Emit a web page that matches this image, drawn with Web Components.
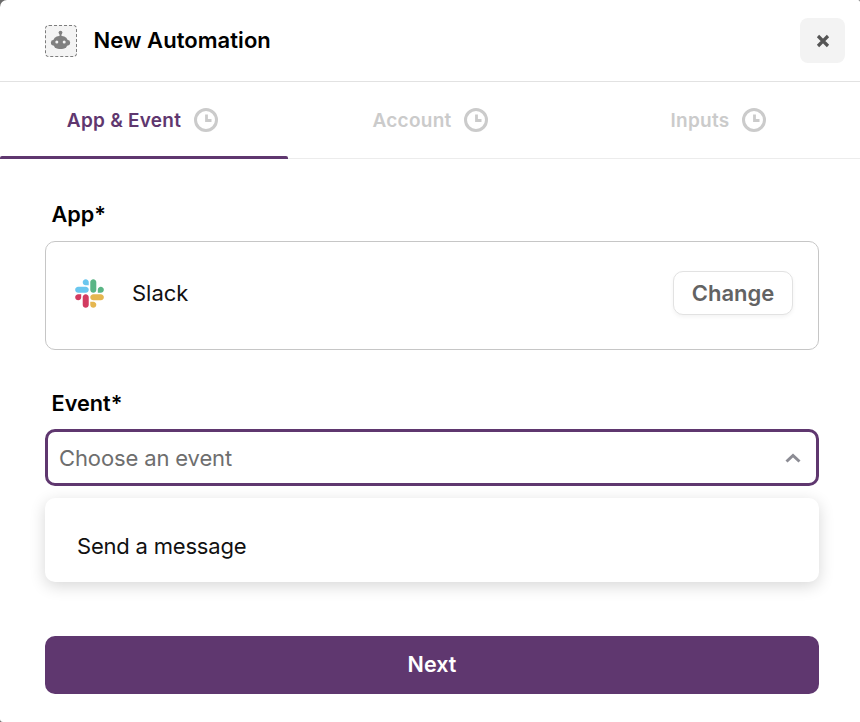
<!DOCTYPE html>
<html><head><meta charset="utf-8"><title>New Automation</title>
<style>
html,body{margin:0;padding:0;height:722px;overflow:hidden;background:#6b6b6b;font-family:Inter,"Liberation Sans",sans-serif}
</style></head><body>
<automation-modal>
  <modal-header slot="header" title-text="New Automation"></modal-header>
  <step-tabs slot="tabs">
    <step-tab active>App &amp; Event</step-tab>
    <step-tab>Account</step-tab>
    <step-tab>Inputs</step-tab>
  </step-tabs>
  <form-field label="App*" style="--label-gap:15px">
    <app-card name="Slack"></app-card>
  </form-field>
  <form-field label="Event*" style="--label-gap:14px;margin-top:41px">
    <event-select placeholder="Choose an event">
      <select-option>Send a message</select-option>
    </event-select>
  </form-field>
  <primary-button slot="footer">Next</primary-button>
</automation-modal>
<script>
function define(name, html, init){
  customElements.define(name, class extends HTMLElement{
    constructor(){super();this.attachShadow({mode:'open'}).innerHTML=html;}
    connectedCallback(){if(init)init.call(this,this.shadowRoot);}
  });
}
define('automation-modal',`<style>
:host{display:flex;flex-direction:column;width:860px;height:722px;background:#fff;border-radius:7px 2px 0 3px;overflow:hidden;box-sizing:border-box;color:#000}
main{flex:1;display:flex;flex-direction:column;padding:43px 41px 0 45px;min-height:0}
footer{padding:0 41px 28px 45px}
</style><slot name="header"></slot><slot name="tabs"></slot><main><slot></slot></main><footer><slot name="footer"></slot></footer>`);
define('modal-header',`<style>
:host{display:flex;align-items:center;height:81px;border-bottom:1px solid #e2e2e2;padding:0 15px 0 45px;gap:16.500px;box-sizing:content-box}
.ic{width:32px;height:32px;box-sizing:border-box;border:1px dashed #7d7d7d;border-radius:4px;background:#f4f4f4;display:flex;align-items:center;justify-content:center}
h1{flex:1;margin:0 0 2px;font:600 22px/1 Inter,sans-serif;letter-spacing:.05px;color:#000}
button{width:45px;height:45px;border:0;border-radius:8px;background:#f3f3f3;display:flex;align-items:center;justify-content:center;padding:0}
</style><div class="ic"><svg width="22" height="22" viewBox="0 0 22 22"><circle cx="10.500" cy="2.600" r="1.900" fill="#808080"/><rect x="9.500" y="3" width="2" height="4" fill="#808080"/><rect x="3" y="6" width="15" height="13" rx="6" fill="#808080"/><rect x="1" y="10" width="19" height="5.500" rx="2.200" fill="#808080"/><circle cx="6.800" cy="12" r="1.500" fill="#f4f4f4"/><circle cx="14.200" cy="12" r="1.500" fill="#f4f4f4"/></svg></div>
<h1></h1><button aria-label="Close"><svg width="14" height="14" viewBox="0 0 14 14"><path d="M2 2l10 10M12 2L2 12" stroke="#555" stroke-width="3.200" stroke-linecap="butt"/></svg></button>`,function(s){s.querySelector('h1').textContent=this.getAttribute('title-text');});
define('step-tabs',`<style>:host{display:grid;grid-template-columns:repeat(3,288px);height:76px;border-bottom:1px solid #ececec;box-sizing:content-box}</style><slot></slot>`);
define('step-tab',`<style>
:host{position:relative;display:flex;align-items:center;justify-content:center;gap:13px;padding-right:3px;font:600 19px/1 Inter,sans-serif;letter-spacing:.25px;color:#cbcbcb}
:host([active]){color:#5f376f}
:host([active])::after{content:"";position:absolute;left:0;right:0;bottom:-1px;height:3px;background:#5f376f;border-radius:2px 2px 0 0}
svg{display:block}
</style><span><slot></slot></span><svg width="24" height="24" viewBox="0 0 24 24" fill="none" stroke="#cbcbcb"><circle cx="12" cy="12" r="10.500" stroke-width="3"/><path d="M12.500 6.500V12.500H17.500" stroke-width="2.800"/></svg>`);
define('form-field',`<style>
:host{display:block;position:relative}
label{display:block;font:600 21.700px/24px Inter,sans-serif;color:#000;padding-left:6.500px;margin-bottom:var(--label-gap,14px)}
</style><label></label><slot></slot>`,function(s){s.querySelector('label').textContent=this.getAttribute('label');});
define('app-card',`<style>
:host{display:flex;align-items:center;height:109px;box-sizing:border-box;border:1px solid #c6c6c6;border-radius:10px;padding:0 25px 6px 29px;gap:28px}
svg{display:block;flex:none;margin-top:1px}
span{flex:1;font:400 22px/1 Inter,sans-serif;color:#111}
button{width:120px;height:44px;box-sizing:border-box;border:1px solid #e2e2e2;border-radius:10px;background:#fff;color:#636363;font:600 22px/1 Inter,sans-serif;padding:0;box-shadow:0 2px 4px rgba(0,0,0,.05)}
</style><svg width="29" height="29" viewBox="0 0 127 127"><path fill="#d23b60" d="M27.200 80c0 7.300-5.900 13.200-13.200 13.200C6.700 93.200.8 87.300.8 80c0-7.300 5.900-13.200 13.200-13.200h13.200V80zm6.600 0c0-7.300 5.900-13.200 13.200-13.200 7.300 0 13.200 5.900 13.200 13.200v33c0 7.300-5.900 13.200-13.200 13.200-7.300 0-13.200-5.900-13.200-13.200V80z"/><path fill="#6ac6ee" d="M47 27c-7.300 0-13.200-5.900-13.200-13.200C33.800 6.500 39.700.6 47 .6c7.300 0 13.200 5.900 13.200 13.200V27H47zm0 6.700c7.300 0 13.200 5.900 13.200 13.200 0 7.300-5.900 13.200-13.200 13.200H13.900C6.600 60.100.7 54.200.7 46.900c0-7.300 5.900-13.200 13.200-13.200H47z"/><path fill="#5ab585" d="M99.900 46.900c0-7.300 5.900-13.200 13.200-13.200 7.300 0 13.200 5.900 13.200 13.200 0 7.300-5.900 13.200-13.200 13.200H99.900V46.900zm-6.600 0c0 7.300-5.900 13.200-13.200 13.200-7.300 0-13.200-5.900-13.200-13.200V13.800C66.900 6.500 72.800.6 80.100.6c7.300 0 13.200 5.900 13.200 13.200v33.100z"/><path fill="#e5b64f" d="M80.100 99.800c7.300 0 13.200 5.900 13.200 13.200 0 7.300-5.900 13.200-13.200 13.200-7.300 0-13.200-5.900-13.200-13.200V99.800h13.200zm0-6.600c-7.300 0-13.200-5.900-13.200-13.200 0-7.300 5.900-13.200 13.200-13.200h33.100c7.300 0 13.200 5.900 13.200 13.200 0 7.300-5.900 13.200-13.200 13.200H80.100z"/></svg><span></span><button>Change</button>`,function(s){s.querySelector('span').textContent=this.getAttribute('name');});
define('event-select',`<style>
:host{display:block;position:relative}
.box{display:flex;align-items:center;justify-content:space-between;height:57px;box-sizing:border-box;border:3px solid #5f376f;border-radius:10px;padding:0 15px 0 11px;font:400 22px/1 Inter,sans-serif;letter-spacing:-.13px;color:#6e6e6e}
svg{display:block}
.menu{position:absolute;left:0;right:0;top:69px;height:84px;background:#fff;border-radius:10px;box-shadow:0 4px 16px rgba(0,0,0,.16);display:flex;align-items:center;padding:12px 32px 0;box-sizing:border-box}
</style><div class="box"><span></span><svg width="16" height="10" viewBox="0 0 16 10"><path d="M1.500 8.500L8 2.500l6.500 6" fill="none" stroke="#8c8c94" stroke-width="3"/></svg></div><div class="menu"><slot></slot></div>`,function(s){s.querySelector('.box span').textContent=this.getAttribute('placeholder');});
define('select-option',`<style>:host{display:block;font:400 22px/1 Inter,sans-serif;letter-spacing:-.2px;color:#111}</style><slot></slot>`);
define('primary-button',`<style>
:host{display:block}
button{display:block;width:100%;height:58px;border:0;border-radius:10px;background:#5f376f;color:#fff;font:600 21.500px/1 Inter,sans-serif;padding:0 0 1px}
</style><button><slot></slot></button>`);
</script>
</body></html>
